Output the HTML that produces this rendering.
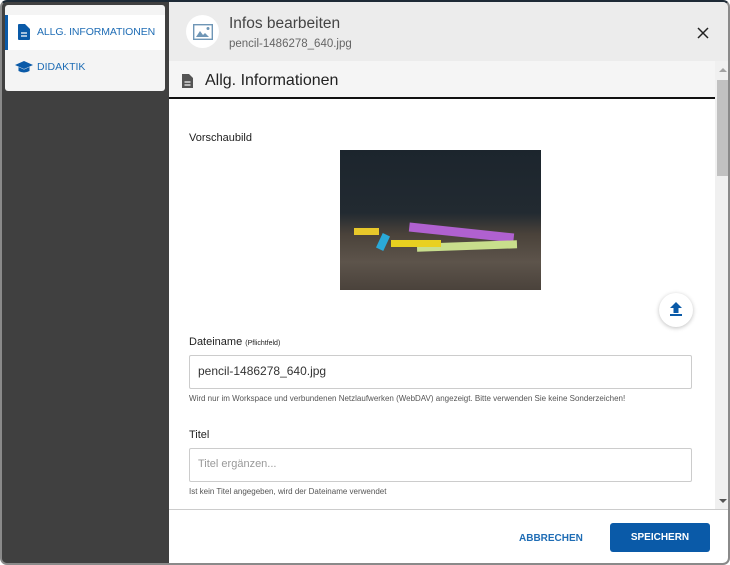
<!DOCTYPE html>
<html><head><style>
*{margin:0;padding:0;box-sizing:border-box}
body{width:730px;height:565px;background:#fff;font-family:"Liberation Sans",sans-serif;position:relative;overflow:hidden}
.frame{position:absolute;left:0;top:0;width:730px;height:565px;border:2px solid #8a8a8a;border-top-color:#1d2a36;border-radius:7px;overflow:hidden;background:#414141}
.a{position:absolute}
</style></head><body>
<div class="frame">
 <div class="a" style="left:0;top:0;width:167px;height:563px;background:#404040"></div>
 <div class="a" style="left:3px;top:3px;width:160px;height:86px;background:#f4f4f4;border-radius:3px;overflow:hidden">
  <div class="a" style="left:0;top:10px;width:160px;height:35px;background:#fff;border-left:3px solid #0a5aa8"></div>
  <svg class="a" style="left:13px;top:19px" width="12" height="16" viewBox="0 0 12 16"><path d="M0 1q0-1 1-1h6l5 5v10q0 1-1 1H1q-1 0-1-1z" fill="#0a5aa8"/><path d="M3 9h6M3 12h6" stroke="#fff" stroke-width="1.3"/></svg>
  <div class="a" style="left:32px;top:21px;font-size:10.5px;color:#1f6db5;letter-spacing:-0.1px">ALLG. INFORMATIONEN</div>
  <svg class="a" style="left:10px;top:55px" width="18" height="14" viewBox="0 0 18 14"><path d="M9 1L0 5l9 4 9-4z" fill="#0a5aa8"/><path d="M3.5 7v4q5.5 3 11 0V7L9 9.5z" fill="#0a5aa8"/></svg>
  <div class="a" style="left:32px;top:56px;font-size:10.5px;color:#1f6db5">DIDAKTIK</div>
 </div>
 <div class="a" style="left:167px;top:-2px;width:561px;height:567px;background:#fff">
  <div class="a" style="left:0;top:0;width:561px;height:61px;background:#ececec"></div>
  <div class="a" style="left:17px;top:15px;width:33px;height:33px;border-radius:50%;background:#fff"></div>
  <svg class="a" style="left:24px;top:24px" width="20" height="16" viewBox="0 0 20 16"><rect x="0.7" y="0.7" width="18.6" height="14.6" fill="none" stroke="#6f96b6" stroke-width="1.4"/><path d="M3 13l4-6 3 4 2-2 4 4z" fill="#6f96b6"/><circle cx="15" cy="4.5" r="1.5" fill="#6f96b6"/></svg>
  <div class="a" style="left:60px;top:15px;font-size:15.5px;color:#444">Infos bearbeiten</div>
  <div class="a" style="left:60px;top:38px;font-size:11.5px;color:#666">pencil-1486278_640.jpg</div>
  <svg class="a" style="left:528px;top:27px" width="12" height="12" viewBox="0 0 12 12"><path d="M1 1l10 10M11 1L1 11" stroke="#222" stroke-width="1.5"/></svg>
  <div class="a" style="left:0;top:61px;width:546px;height:38px;background:#f5f5f5;border-bottom:2px solid #111"></div>
  <svg class="a" style="left:13px;top:74px" width="11" height="14" viewBox="0 0 11 14"><path d="M0 0h7l4 4v10H0z" fill="#555"/><path d="M2.5 8h6M2.5 11h6" stroke="#f5f5f5" stroke-width="1.2"/></svg>
  <div class="a" style="left:36px;top:72px;font-size:16px;color:#222">Allg. Informationen</div>
  <div class="a" style="left:546px;top:61px;width:15px;height:448px;background:#f0f0f0"></div>
  <div class="a" style="left:548px;top:80px;width:12px;height:96px;background:#c1c1c1"></div>
  <div class="a" style="left:550px;top:68px;width:0;height:0;border:4px solid transparent;border-bottom-color:#a3a3a3;border-top:0"></div>
  <div class="a" style="left:550px;top:499px;width:0;height:0;border:4px solid transparent;border-top-color:#555;border-bottom:0"></div>
  <div class="a" style="left:20px;top:132px;font-size:11px;color:#222">Vorschaubild</div>
  <div class="a" style="left:171px;top:150px;width:201px;height:140px;background:linear-gradient(180deg,#1c252d 0%,#222a31 45%,#4a423a 60%,#5d544b 80%,#4a423b 100%)"></div>
  <div class="a" style="left:240px;top:228px;width:105px;height:9px;background:#b061d0;transform:rotate(6deg)"></div>
  <div class="a" style="left:248px;top:242px;width:100px;height:8px;background:#c8de8c;transform:rotate(-2deg)"></div>
  <div class="a" style="left:222px;top:240px;width:50px;height:7px;background:#e8d020"></div>
  <div class="a" style="left:185px;top:228px;width:25px;height:7px;background:#e8c82a"></div>
  <div class="a" style="left:210px;top:234px;width:8px;height:16px;background:#2aa9d8;transform:rotate(25deg)"></div>
  <div class="a" style="left:490px;top:293px;width:34px;height:34px;border-radius:50%;background:#fff;box-shadow:0 1px 4px rgba(0,0,0,.25)"></div>
  <svg class="a" style="left:501px;top:302px" width="12" height="14" viewBox="0 0 12 14"><path d="M6 0L0 6h3.5v5h5V6H12z" fill="#0a5aa8"/><rect x="0" y="12" width="12" height="2" fill="#0a5aa8"/></svg>
  <div class="a" style="left:20px;top:336px;font-size:11px;color:#222">Dateiname <span style="font-size:7px">(Pflichtfeld)</span></div>
  <div class="a" style="left:20px;top:355px;width:503px;height:34px;border:1px solid #ccc;border-radius:2px"></div>
  <div class="a" style="left:29px;top:364px;font-size:12px;color:#333">pencil-1486278_640.jpg</div>
  <div class="a" style="left:20px;top:394px;font-size:8px;color:#555">Wird nur im Workspace und verbundenen Netzlaufwerken (WebDAV) angezeigt. Bitte verwenden Sie keine Sonderzeichen!</div>
  <div class="a" style="left:20px;top:429px;font-size:11px;color:#222">Titel</div>
  <div class="a" style="left:20px;top:448px;width:503px;height:34px;border:1px solid #ccc;border-radius:2px"></div>
  <div class="a" style="left:29px;top:458px;font-size:11px;color:#999">Titel ergänzen...</div>
  <div class="a" style="left:20px;top:487px;font-size:8px;color:#555">Ist kein Titel angegeben, wird der Dateiname verwendet</div>
  <div class="a" style="left:0;top:509px;width:561px;height:1px;background:#ccc"></div>
  <div class="a" style="left:350px;top:533px;font-size:10px;font-weight:bold;color:#1f6db5">ABBRECHEN</div>
  <div class="a" style="left:441px;top:523px;width:100px;height:29px;background:#0a5aa8;border-radius:3px;color:#fff;font-size:10px;font-weight:bold;text-align:center;line-height:29px">SPEICHERN</div>
 </div>
</div>
</body></html>
